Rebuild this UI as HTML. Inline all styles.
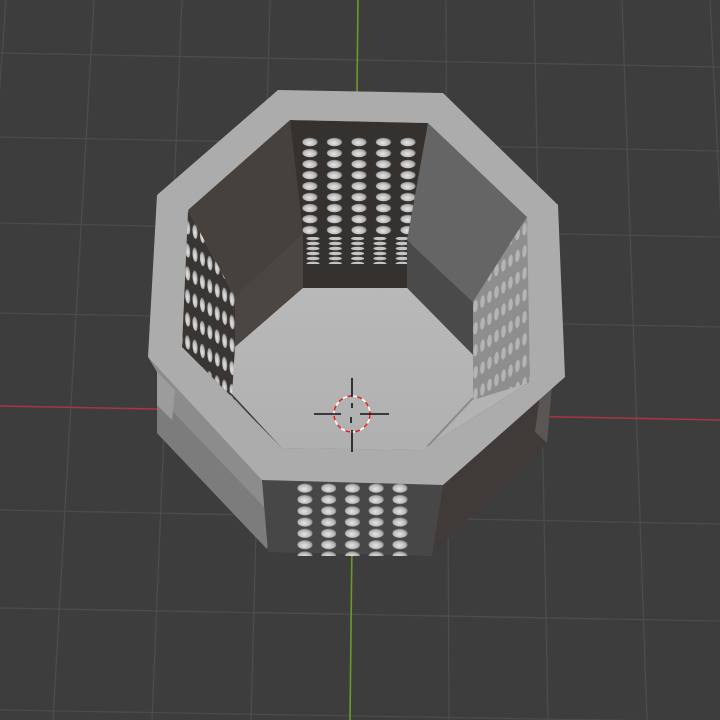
<!DOCTYPE html>
<html><head><meta charset="utf-8"><style>
html,body{margin:0;padding:0;background:#3d3d3d;}
svg{display:block}
</style></head><body>
<svg width="720" height="720" viewBox="0 0 720 720" xmlns="http://www.w3.org/2000/svg">
<defs>
<radialGradient id="hg" cx="0.45" cy="0.6" r="0.6">
<stop offset="0" stop-color="#e6e6e6"/><stop offset="0.7" stop-color="#b8b8b8"/><stop offset="1" stop-color="#7a7a7a"/>
</radialGradient>
<pattern id="pBack" x="297.75" y="136.5" width="24.5" height="11" patternUnits="userSpaceOnUse">
<ellipse cx="12.25" cy="5.5" rx="7.5" ry="4.3" fill="url(#hg)"/>
</pattern>
<pattern id="pBack2" x="302" y="236" width="22.3" height="5" patternUnits="userSpaceOnUse">
<ellipse cx="11" cy="2.5" rx="6.5" ry="1.8" fill="#c4c4c4"/>
</pattern>
<pattern id="pFront" x="293" y="482.5" width="23.75" height="11.3" patternUnits="userSpaceOnUse">
<ellipse cx="12" cy="5.6" rx="7.5" ry="4.6" fill="url(#hg)"/>
</pattern>
<pattern id="pLeft" x="184" y="200" width="7.4" height="23" patternUnits="userSpaceOnUse" patternTransform="skewY(30)">
<ellipse cx="3.7" cy="11" rx="2.6" ry="7" fill="url(#hg)"/>
</pattern>
<pattern id="pRight" x="472" y="220" width="7" height="22" patternUnits="userSpaceOnUse" patternTransform="skewY(-34)">
<ellipse cx="3.5" cy="11" rx="2.3" ry="6" fill="#b4b4b4"/>
</pattern>
<linearGradient id="floorG" x1="0" y1="0" x2="0" y2="1">
<stop offset="0" stop-color="#b9b9b9"/><stop offset="1" stop-color="#b0b0b0"/>
</linearGradient>
</defs>

<rect width="720" height="720" fill="#3d3d3d"/>
<g stroke="#4c4c4c" stroke-width="1.3" fill="none">
<line x1="6" y1="0" x2="-46" y2="720"/>
<line x1="94" y1="0" x2="53" y2="720"/>
<line x1="182" y1="0" x2="152" y2="720"/>
<line x1="270" y1="0" x2="251" y2="720"/>
<line x1="446" y1="0" x2="449" y2="720"/>
<line x1="534" y1="0" x2="548" y2="720"/>
<line x1="622" y1="0" x2="647" y2="720"/>
<line x1="710" y1="0" x2="746" y2="720"/>
<line x1="0" y1="53" x2="720" y2="67"/>
<line x1="0" y1="137" x2="720" y2="151"/>
<line x1="0" y1="223" x2="720" y2="237"/>
<line x1="0" y1="313" x2="720" y2="327"/>
<line x1="0" y1="510" x2="720" y2="524"/>
<line x1="0" y1="608" x2="720" y2="621"/>
<line x1="0" y1="710" x2="720" y2="722"/>
</g>
<line x1="358" y1="0" x2="350" y2="720" stroke="#6a9a2a" stroke-width="1.6"/>
<line x1="0" y1="406" x2="720" y2="420" stroke="#a83444" stroke-width="1.6"/>

<!-- lower body -->
<polygon points="148,357 263,478 278,483 267,549 157,433 157,372" fill="#8c8c8c"/>
<polygon points="157,395 267,510 267,549 157,433" fill="#7c7c7c"/>
<polygon points="157,372 175,390 172,420 157,405" fill="#9c9c9c"/>
<polygon points="565,377 552,385 547,443 432,553 443,485" fill="#403b38"/>
<polygon points="552,385 547,443 535,432 540,395" fill="#5a5654"/>
<polygon points="262,480 443,485 432,556 268,552" fill="#474747"/>
<rect x="293" y="482" width="120" height="74" fill="url(#pFront)"/>

<!-- interior base -->
<polygon points="290,120 188,210 182,347 282,448 422,450 530,382 527,217 428,123" fill="#b3b3b3"/>
<polygon points="290,120 428,123 407,288 303,288" fill="#35312e"/>
<rect x="298" y="136" width="122" height="100" fill="url(#pBack)"/>
<rect x="302" y="237" width="110" height="27" fill="url(#pBack2)"/>
<polygon points="290,120 303,233 303,288 235,347 235,297 188,210" fill="#46413d"/>
<polygon points="303,233 303,288 235,347 235,297" fill="#4b4642"/>
<polygon points="188,210 235,297 235,400 182,347" fill="#393532"/>
<clipPath id="cL"><polygon points="188,210 235,297 235,400 182,347"/></clipPath>
<rect x="182" y="200" width="54" height="205" fill="url(#pLeft)" clip-path="url(#cL)"/>
<polygon points="428,123 527,217 473,302 407,240" fill="#656565"/>
<polygon points="407,240 473,302 473,355 407,288" fill="#4a4a4a"/>
<polygon points="303,288 407,288 473,355 473,400 428,450 282,448 232,395 235,347" fill="url(#floorG)"/>
<polygon points="527,217 531,382 473,400 473,302" fill="#8e8e8e"/>
<clipPath id="cR"><polygon points="527,217 531,382 473,400 473,302"/></clipPath>
<rect x="470" y="210" width="62" height="195" fill="url(#pRight)" clip-path="url(#cR)"/>
<line x1="230" y1="393" x2="280" y2="447" stroke="#3a3a3a" stroke-width="1.5"/>
<line x1="473" y1="398" x2="427" y2="447" stroke="#8a8a8a" stroke-width="2"/>

<!-- rim -->
<path fill-rule="evenodd" fill="#acacac" d="M278,90 L443,93 L558,205 L565,377 L443,485 L262,480 L148,357 L157,195 Z M290,120 L188,210 L182,347 L282,448 L422,450 L530,382 L527,217 L428,123 Z"/>

<!-- 3D cursor -->
<g>
<circle cx="352" cy="414" r="18" fill="none" stroke="#ffffff" stroke-width="1.6"/>
<circle cx="352" cy="414" r="18" fill="none" stroke="#e52020" stroke-width="1.6" stroke-dasharray="5 5"/>
<g stroke="#111" stroke-width="1.6">
<line x1="352" y1="378" x2="352" y2="397"/>
<line x1="352" y1="430" x2="352" y2="452"/>
<line x1="314" y1="414" x2="341" y2="414"/>
<line x1="360" y1="414" x2="389" y2="414"/>
<line x1="352" y1="403" x2="352" y2="408"/>
<line x1="351" y1="417" x2="351" y2="423"/>
</g>
</g>
</svg>
</body></html>
